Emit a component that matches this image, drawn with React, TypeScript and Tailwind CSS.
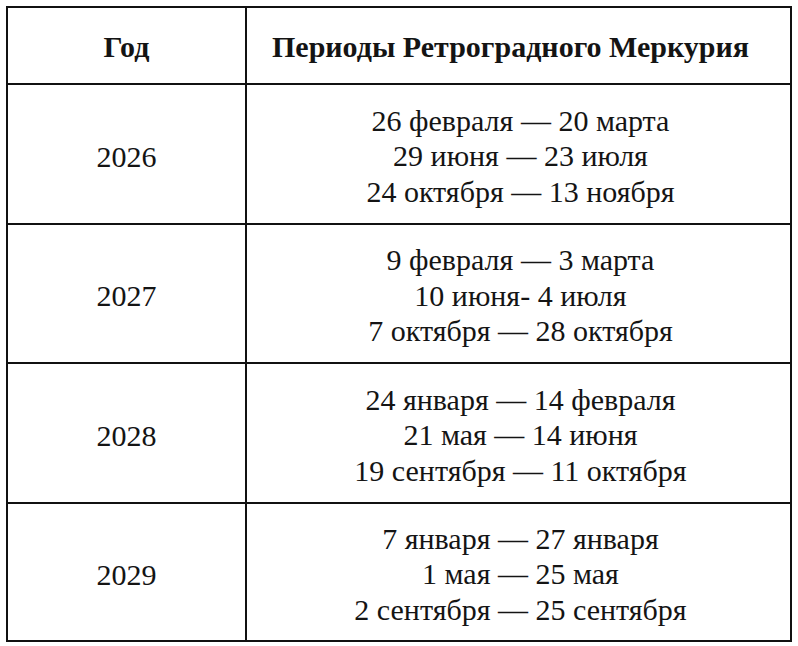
import React from "react";

const rows: { year: string; lines: string[]; h: string }[] = [
  { year: "2026", lines: ["26 февраля — 20 марта", "29 июня — 23 июля", "24 октября — 13 ноября"], h: "h-[140px]" },
  { year: "2027", lines: ["9 февраля — 3 марта", "10 июня- 4 июля", "7 октября — 28 октября"], h: "h-[139px]" },
  { year: "2028", lines: ["24 января — 14 февраля", "21 мая — 14 июня", "19 сентября — 11 октября"], h: "h-[140px]" },
  { year: "2029", lines: ["7 января — 27 января", "1 мая — 25 мая", "2 сентября — 25 сентября"], h: "h-[138px]" },
];

export default function App() {
  return (
    <div className="w-[798px] h-[646px] bg-white pt-[6px] pl-[6px] text-[#141414] font-[family-name:'Liberation_Serif',serif]">
      <div className="w-[786px] border-2 border-[#111] grid grid-cols-[239px_1fr]">
        <div className="h-[75px] border-r-2 border-[#111] flex items-center justify-center text-[30px] font-bold pt-[2px]">
          Год
        </div>
        <div className="h-[75px] flex items-center justify-center text-[30px] font-bold pt-[2px] pr-[16px]">
          Периоды Ретроградного Меркурия
        </div>
        {rows.map((r) => (
          <React.Fragment key={r.year}>
            <div className={`${r.h} border-t-2 border-r-2 border-[#111] flex items-center justify-center text-[30px] pt-[4px]`}>
              {r.year}
            </div>
            <div className={`${r.h} border-t-2 border-[#111] flex flex-col items-center justify-center text-[30px] leading-[35.5px] pt-[4px] pl-[4px]`}>
              {r.lines.map((l) => (
                <div key={l}>{l}</div>
              ))}
            </div>
          </React.Fragment>
        ))}
      </div>
    </div>
  );
}
